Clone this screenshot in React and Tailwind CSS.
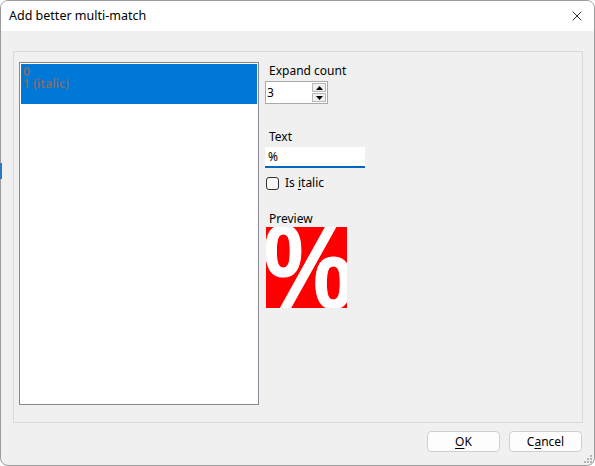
import { X } from "lucide-react";

const font = { fontFamily: '"Noto Sans", "Segoe UI", "Liberation Sans", sans-serif' };

export default function App() {
  return (
    <div className="relative w-[595px] h-[466px] bg-white" style={font}>
      {/* bit of the window behind */}
      <div className="absolute left-0 top-[163px] w-[2px] h-[16px] bg-[#2a7bc4]" />

      <div className="w-[595px] h-[466px] flex flex-col border border-[#9b9b9b] rounded-[8px] overflow-hidden bg-[#f0f0f0] text-[12px] text-black">
        {/* title bar */}
        <div className="h-[30px] bg-white flex items-center justify-between pl-[8px] pr-[9px] shrink-0">
          <span className="text-[12.5px] leading-none">Add better multi-match</span>
          <X size={16} strokeWidth={1.2} className="text-black" />
        </div>

        <div className="flex-1 flex flex-col pl-[12px] pr-[11px] pt-[20px] relative">
          {/* group panel */}
          <div className="w-[570px] h-[372px] border border-[#dadada] flex gap-[6px] pl-[5px] pt-[10px]">
            {/* list box */}
            <div className="w-[240px] h-[343px] border border-[#878791] bg-white p-[1px]">
              <div className="h-[40px] bg-[#0078d7] pl-[2px] pt-[2px] text-[#7b6f74] font-semibold leading-[12px] text-[12px]">
                <div>0</div>
                <div>1 (italic)</div>
              </div>
            </div>

            {/* right column */}
            <div className="flex flex-col">
              <div className="pl-[4px] leading-[16px] mt-[1px]">Expand count</div>
              <div className="mt-[2px] w-[63px] h-[23px] border border-[#a9a9a9] bg-white flex items-stretch">
                <div className="flex-1 pl-[1px] leading-[21px]">3</div>
                <div className="w-[14px] flex flex-col my-[1px] mr-[1px] gap-[1px]">
                  <div className="flex-1 bg-[#f0f0f0] border border-[#b8b8b8] flex items-center justify-center">
                    <svg width="7" height="4" viewBox="0 0 7 4"><path d="M3.5 0 L7 4 L0 4 Z" fill="#000" /></svg>
                  </div>
                  <div className="flex-1 bg-[#f0f0f0] border border-[#b8b8b8] flex items-center justify-center">
                    <svg width="7" height="4" viewBox="0 0 7 4"><path d="M0 0 L7 0 L3.5 4 Z" fill="#000" /></svg>
                  </div>
                </div>
              </div>

              <div className="pl-[4px] leading-[16px] mt-[25px]">Text</div>
              <div className="mt-[2px] w-[100px] h-[21px] bg-white border-b-2 border-[#0067c0] pl-[3px] leading-[20px]">%</div>

              <label className="mt-[8px] flex items-center gap-[6px] pl-[1px]">
                <span className="w-[13px] h-[13px] rounded-[3px] border border-[#333] bg-[#f8f8f8]" />
                <span className="leading-[14px]">
                  Is <span className="underline underline-offset-2">i</span>talic
                </span>
              </label>

              <div className="pl-[4px] leading-[16px] mt-[21px]">Preview</div>
              <div className="ml-[1px] w-[81px] h-[81px] bg-[#ff0000] overflow-hidden flex items-center justify-center">
                <span
                  className="text-white font-bold leading-none text-[118px] [-webkit-text-stroke:1px_white] scale-x-[0.86] mt-[-1px] ml-[4px]"
                  style={{ fontFamily: '"Liberation Sans", Arial, sans-serif' }}
                >
                  %
                </span>
              </div>
            </div>
          </div>

          {/* buttons */}
          <div className="flex justify-end gap-[9px] mt-[8px] pr-[1px]">
            <button className="w-[73px] h-[21px] rounded-[4px] border border-[#d0d0d0] bg-[#fdfdfd] text-[12px] leading-none">
              <span className="underline underline-offset-2">O</span>K
            </button>
            <button className="w-[73px] h-[21px] rounded-[4px] border border-[#d0d0d0] bg-[#fdfdfd] text-[12px] leading-none">
              C<span className="underline underline-offset-2">a</span>ncel
            </button>
          </div>

          {/* resize grip */}
          <svg className="absolute right-[2px] bottom-[2px]" width="10" height="10" viewBox="0 0 10 10">
            {[[8, 2], [8, 5], [5, 5], [8, 8], [5, 8], [2, 8]].map(([x, y], i) => (
              <rect key={i} x={x} y={y} width="2" height="2" fill="#b5b5b5" />
            ))}
          </svg>
        </div>
      </div>
    </div>
  );
}
